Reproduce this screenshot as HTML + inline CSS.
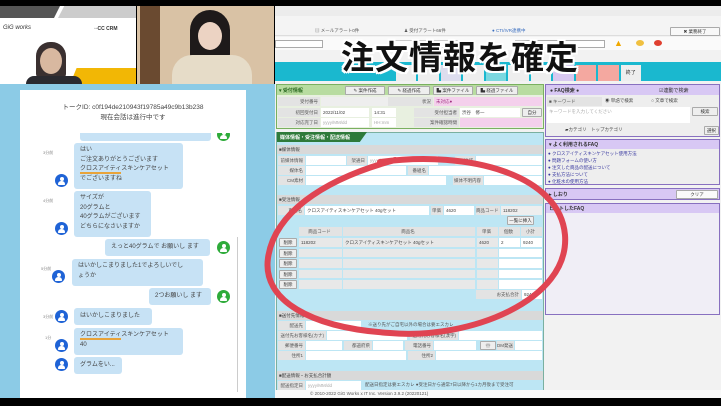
<!DOCTYPE html>
<html><head><meta charset="utf-8"><style>
*{margin:0;padding:0;box-sizing:border-box;white-space:nowrap}
body{width:721px;height:406px;overflow:hidden;background:#000;position:relative;font-family:"Liberation Sans","Noto Sans CJK JP",sans-serif;font-size:6px;color:#333}
.a{position:absolute}
.bub{position:absolute;background:#c7e2f5;border-radius:3px;padding:3px 6px;font-size:6px;line-height:9.5px;color:#444;overflow:hidden}
.av{position:absolute;width:13px;height:13px;border-radius:50%;background:#1f63d6}
.av.g{background:#2eab3a}
.av::before{content:"";position:absolute;left:4.5px;top:2.5px;width:4px;height:4px;border-radius:50%;background:#fff}
.av::after{content:"";position:absolute;left:3px;top:7px;width:7px;height:3.5px;border-radius:4px 4px 1px 1px;background:#fff}
.tm{position:absolute;font-size:4px;color:#888}
.lb{position:absolute;background:#e3e3e3;font-size:4.5px;color:#555;text-align:right;padding-right:2px;height:9px;line-height:9px;overflow:hidden}
.in{position:absolute;background:#fff;height:9px;font-size:4.5px;line-height:9px;padding-left:2px;color:#444;overflow:hidden}
.btn{position:absolute;background:#eee;border:1px solid #aaa;border-radius:1px;font-size:4.5px;text-align:center;color:#333;height:9px;line-height:7px;overflow:hidden}
.sec{position:absolute;background:#d9d9d9;font-size:4.5px;color:#444;height:9px;line-height:9px;padding-left:2px}
</style></head><body>
<div class="a" style="left:0;top:6px;width:136px;height:78px;background:#fff"></div>
<div class="a" style="left:0;top:6px;width:60px;height:12px;background:#555;clip-path:polygon(0 0,100% 0,90% 100%,0 100%)"></div>
<div class="a" style="left:58px;top:6px;width:78px;height:12px;background:#ccc;clip-path:polygon(8% 0,100% 0,100% 100%,0 100%)"></div>
<div class="a" style="left:70px;top:68px;width:66px;height:16px;background:#f2b705;clip-path:polygon(10% 0,100% 0,100% 100%,0 100%)"></div>
<div class="a" style="left:3px;top:25px;font-size:6px;font-style:italic;color:#333">GiG works</div>
<div class="a" style="left:94px;top:26px;font-size:5px;color:#333;font-weight:bold">◦◦CC CRM</div>
<div class="a" style="left:36px;top:42px;width:30px;height:36px;border-radius:14px 14px 4px 4px;background:#3a3030"></div>
<div class="a" style="left:40px;top:48px;width:22px;height:26px;border-radius:50%;background:#d8b8a0"></div>
<div class="a" style="left:26px;top:76px;width:56px;height:8px;border-radius:10px 10px 0 0;background:#2a2a30"></div>
<div class="a" style="left:137px;top:6px;width:137px;height:78px;background:#d9c2a5"></div>
<div class="a" style="left:140px;top:6px;width:20px;height:78px;background:#6a4a30"></div>
<div class="a" style="left:190px;top:10px;width:40px;height:50px;border-radius:20px 20px 6px 6px;background:#1e1a1a"></div>
<div class="a" style="left:198px;top:22px;width:24px;height:28px;border-radius:50%;background:#ecd3c3"></div>
<div class="a" style="left:172px;top:55px;width:80px;height:29px;border-radius:20px 20px 0 0;background:#e6dcc8"></div>
<div class="a" style="left:0;top:84px;width:275px;height:314px;background:#8ccbe6"></div>
<div class="a" style="left:20px;top:90px;width:226px;height:308px;background:#fff"></div>
<div class="a" style="left:20px;top:103px;width:226px;text-align:center;font-size:6.5px;line-height:10px;color:#444">トークID: c0f194de210943f19785a49c9b13b238<br>現在会話は進行中です</div>
<div class="bub" style="left:80px;top:128px;width:131px;height:13px;padding:0"></div>
<div class="av g" style="left:217px;top:128px"></div>
<div class="a" style="left:20px;top:128px;width:226px;height:5px;background:#fff"></div>
<div class="tm" style="left:43px;top:150px">3分前</div>
<div class="bub" style="left:74px;top:143px;width:109px;height:46px">はい<br>ご注文ありがとうございます<br><span style="border-bottom:2px solid #e8a33a">クロスアイティ</span>スキンケアセット<br>でございますね</div>
<div class="av" style="left:55px;top:174px"></div>
<div class="tm" style="left:43px;top:198px">4分前</div>
<div class="bub" style="left:74px;top:191px;width:77px;height:46px">サイズが<br>20グラムと<br>40グラムがございます<br>どちらになさいますか</div>
<div class="av" style="left:55px;top:222px"></div>
<div class="bub" style="left:105px;top:239px;width:105px;height:17px;line-height:11px">えっと40グラムで お願いし ます</div>
<div class="av g" style="left:217px;top:241px"></div>
<div class="tm" style="left:41px;top:266px">5分前</div>
<div class="bub" style="left:72px;top:259px;width:131px;height:27px">はいかしこまりました1でよろしいでし<br>ょうか</div>
<div class="av" style="left:52px;top:270px"></div>
<div class="bub" style="left:149px;top:288px;width:62px;height:17px;line-height:11px">2つお願いし ます</div>
<div class="av g" style="left:217px;top:290px"></div>
<div class="tm" style="left:43px;top:314px">3分前</div>
<div class="bub" style="left:74px;top:308px;width:78px;height:17px;line-height:11px">はいかしこまりました</div>
<div class="av" style="left:55px;top:310px"></div>
<div class="tm" style="left:45px;top:335px">1分</div>
<div class="bub" style="left:74px;top:328px;width:109px;height:27px"><span style="border-bottom:2px solid #e8a33a">クロスアイティ</span>スキンケアセット<br>40</div>
<div class="av" style="left:55px;top:339px"></div>
<div class="bub" style="left:74px;top:357px;width:48px;height:17px;line-height:11px">グラムをい...</div>
<div class="av" style="left:55px;top:358px"></div>
<div class="a" style="left:237px;top:237px;width:1px;height:155px;background:#ccc"></div>
<div class="a" style="left:275px;top:6px;width:446px;height:392px;background:#f2f2f2"></div>
<div class="a" style="left:275px;top:6px;width:446px;height:10px;background:#ececec"></div>
<div class="a" style="left:275px;top:16px;width:446px;height:20px;background:#f4f4f4;border-bottom:1px solid #ddd"></div>
<div class="a" style="left:315px;top:28px;font-size:4.5px;color:#555">▤ メールアラート0件</div>
<div class="a" style="left:404px;top:28px;font-size:4.5px;color:#555">♟ 受付アラート66件</div>
<div class="a" style="left:492px;top:28px;font-size:4.5px;color:#3b6fc0">● CTI/IVR連携中</div>
<div class="btn" style="left:670px;top:27px;width:50px;height:9px;background:#f8f8f8">✖ 業務終了</div>
<div class="a" style="left:275px;top:37px;width:446px;height:13px;background:#fafafa"></div>
<div class="in" style="left:275px;top:40px;width:48px;border:1px solid #aaa;height:8px"></div>
<div class="in" style="left:390px;top:40px;width:80px;border:1px solid #ccc;height:8px"></div>
<div class="in" style="left:515px;top:40px;width:90px;border:1px solid #aaa;height:8px"></div>
<div class="a" style="left:614px;top:38px;color:#f0a800;font-size:9px">▲</div>
<div class="a" style="left:636px;top:40px;width:8px;height:6px;border-radius:50%;background:#f0c040"></div>
<div class="a" style="left:654px;top:40px;width:8px;height:6px;border-radius:50%;background:#e04030"></div>
<div class="a" style="left:275px;top:62px;width:446px;height:19px;background:#1ab8cf"></div>
<div class="a" style="left:396px;top:65px;width:245px;height:16px;display:flex;gap:2px">
<div style="flex:1;background:#eee"></div><div style="flex:1;background:#eee"></div><div style="flex:1;background:#dde"></div><div style="flex:1;background:#eee"></div><div style="flex:1;background:#7cd8e0"></div><div style="flex:1;background:#eee"></div><div style="flex:1;background:#eee"></div><div style="flex:1;background:#d8c8f0"></div><div style="flex:1;background:#f4a8a0"></div><div style="flex:1;background:#f4a8a0"></div><div style="flex:1;background:#eee;font-size:5px;text-align:center;line-height:16px">終了</div></div>
<div class="a" style="left:341px;top:38px;font-size:33px;font-weight:bold;color:#111;letter-spacing:1px;text-shadow:2px 0 #fff,-2px 0 #fff,0 2px #fff,0 -2px #fff,2px 2px #fff,-2px -2px #fff,2px -2px #fff,-2px 2px #fff;line-height:40px">注文情報を確定</div>
<div class="a" style="left:276px;top:84px;width:268px;height:45px;background:#e8f0e0;border:1px solid #7ab060"></div>
<div class="a" style="left:277px;top:85px;width:266px;height:10px;background:#b8dca0"></div>
<div class="a" style="left:279px;top:87px;font-size:5px;color:#2a6a20;font-weight:bold">▾ 受付情報</div>
<div class="btn" style="left:345px;top:86px;width:40px">✎ 案件作成</div>
<div class="btn" style="left:388px;top:86px;width:42px">✎ 経過作成</div>
<div class="btn" style="left:433px;top:86px;width:40px">▙ 案件ファイル</div>
<div class="btn" style="left:476px;top:86px;width:42px">▙ 経過ファイル</div>
<div class="lb" style="left:278px;top:97px;width:42px">受付番号</div>
<div class="in" style="left:321px;top:97px;width:68px;background:#eee"></div>
<div class="lb" style="left:388px;top:97px;width:45px">状況</div>
<div class="in" style="left:434px;top:97px;width:108px;background:#f4d0ec;color:#a03080">未対応●</div>
<div class="lb" style="left:278px;top:108px;width:42px">初回受付日</div>
<div class="in" style="left:321px;top:108px;width:48px">2022/11/02</div>
<div class="in" style="left:372px;top:108px;width:24px">14:31</div>
<div class="lb" style="left:414px;top:108px;width:45px">受付担当者</div>
<div class="in" style="left:460px;top:108px;width:60px">渋谷　修一</div>
<div class="btn" style="left:522px;top:108px;width:20px">自分</div>
<div class="lb" style="left:278px;top:118px;width:42px">対応完了日</div>
<div class="in" style="left:321px;top:118px;width:48px;color:#aaa">yyyy/MM/dd</div>
<div class="in" style="left:372px;top:118px;width:24px;color:#aaa">HH:mm</div>
<div class="lb" style="left:414px;top:118px;width:45px">案件確認時間</div>
<div class="in" style="left:460px;top:118px;width:82px;background:#f4d0ec"></div>
<div class="a" style="left:276px;top:132px;width:268px;height:262px;background:#bde6f4;border:1px solid #7ab0a0"></div>
<div class="a" style="left:277px;top:132px;width:90px;height:10px;background:#2e7a3a;clip-path:polygon(0 0,100% 0,92% 100%,0 100%);color:#fff;font-size:5px;font-weight:bold;padding:2px 3px">媒体情報・受注情報・配送情報</div>
<div class="sec" style="left:277px;top:145px;width:266px">■媒体情報</div>
<div class="lb" style="left:278px;top:156px;width:27px">前媒体情報</div><div class="in" style="left:306px;top:156px;width:40px"></div>
<div class="lb" style="left:347px;top:156px;width:20px">架通日</div><div class="in" style="left:368px;top:156px;width:70px;color:#aaa">yyyy/MM/dd</div>
<div class="lb" style="left:455px;top:156px;width:20px">地域</div><div class="in" style="left:476px;top:156px;width:66px"></div>
<div class="lb" style="left:278px;top:166px;width:27px">媒体名</div><div class="in" style="left:306px;top:166px;width:100px"></div>
<div class="lb" style="left:408px;top:166px;width:20px">番組名</div><div class="in" style="left:429px;top:166px;width:113px"></div>
<div class="lb" style="left:278px;top:176px;width:27px">CM素材</div><div class="in" style="left:306px;top:176px;width:140px"></div>
<div class="lb" style="left:453px;top:176px;width:30px">媒体不明内容</div><div class="in" style="left:484px;top:176px;width:58px"></div>
<div class="sec" style="left:277px;top:195px;width:266px">■受注情報</div>
<div class="lb" style="left:278px;top:206px;width:26px">商品名</div><div class="in" style="left:305px;top:206px;width:124px">クロスアイティスキンケアセット 40gセット</div>
<div class="lb" style="left:431px;top:206px;width:12px">単価</div><div class="in" style="left:444px;top:206px;width:30px">4620</div>
<div class="lb" style="left:476px;top:206px;width:24px">商品コード</div><div class="in" style="left:501px;top:206px;width:41px;background:#eee">118202</div>
<div class="btn" style="left:507px;top:216px;width:27px">一覧に挿入</div>
<div class="lb" style="left:299px;top:227px;width:43px;text-align:center">商品コード</div>
<div class="lb" style="left:343px;top:227px;width:132px;text-align:center">商品名</div>
<div class="lb" style="left:477px;top:227px;width:21px;text-align:center">単価</div>
<div class="lb" style="left:499px;top:227px;width:21px;text-align:center">個数</div>
<div class="lb" style="left:521px;top:227px;width:21px;text-align:center">小計</div>
<div class="a" style="left:278px;top:238px">
<div class="btn" style="position:absolute;left:1px;top:0;width:18px">削除</div>
<div class="in" style="left:21px;top:0;width:43px;background:#e8e8e8">118202</div>
<div class="in" style="left:65px;top:0;width:132px;background:#e8e8e8">クロスアイティスキンケアセット 40gセット</div>
<div class="in" style="left:199px;top:0;width:21px;background:#e8e8e8">4620</div>
<div class="in" style="left:221px;top:0;width:21px">2</div>
<div class="in" style="left:243px;top:0;width:21px">9240</div>
</div>
<div class="a" style="left:278px;top:248px;width:264px;height:44px">
<div style="position:absolute;left:21px;top:1px;width:43px;height:40px;background:#e8e8e8"></div>
<div style="position:absolute;left:65px;top:1px;width:132px;height:40px;background:#e8e8e8"></div>
<div style="position:absolute;left:199px;top:1px;width:21px;height:40px;background:#e8e8e8"></div>
<div style="position:absolute;left:221px;top:1px;width:43px;height:40px;background:#fff"></div>
<div style="position:absolute;left:0;top:9px;width:264px;height:2px;background:#bde6f4"></div>
<div style="position:absolute;left:0;top:19.5px;width:264px;height:2px;background:#bde6f4"></div>
<div style="position:absolute;left:0;top:30px;width:264px;height:2px;background:#bde6f4"></div>
<div class="btn" style="left:1px;top:1px;width:18px">削除</div>
<div class="btn" style="left:1px;top:11px;width:18px">削除</div>
<div class="btn" style="left:1px;top:21.5px;width:18px">削除</div>
<div class="btn" style="left:1px;top:32px;width:18px">削除</div>
</div>
<div class="lb" style="left:476px;top:290px;width:45px">お支払合計</div><div class="in" style="left:522px;top:290px;width:20px">9240</div>
<div class="sec" style="left:277px;top:311px;width:266px">■送付先情報</div>
<div class="lb" style="left:278px;top:321px;width:27px">配送先</div><div class="in" style="left:306px;top:321px;width:55px"></div>
<div class="a" style="left:368px;top:322px;font-size:4.5px;color:#555">※送り先がご自宅以外の場合は要エスカレ</div>
<div class="lb" style="left:278px;top:331px;width:48px">送付先お客様名(カナ)</div><div class="in" style="left:327px;top:331px;width:80px"></div>
<div class="lb" style="left:410px;top:331px;width:48px">送付先お客様名(漢字)</div><div class="in" style="left:459px;top:331px;width:83px"></div>
<div class="lb" style="left:278px;top:341px;width:27px">郵便番号</div><div class="in" style="left:306px;top:341px;width:36px"></div>
<div class="lb" style="left:344px;top:341px;width:28px">都道府県</div><div class="in" style="left:373px;top:341px;width:30px"></div>
<div class="lb" style="left:405px;top:341px;width:28px">電話番号</div><div class="in" style="left:434px;top:341px;width:42px"></div>
<div class="btn" style="left:480px;top:341px;width:16px">☏</div>
<div class="lb" style="left:497px;top:341px;width:17px">DM発送</div><div class="in" style="left:515px;top:341px;width:27px"></div>
<div class="lb" style="left:278px;top:351px;width:27px">住所1</div><div class="in" style="left:306px;top:351px;width:100px"></div>
<div class="lb" style="left:408px;top:351px;width:27px">住所2</div><div class="in" style="left:436px;top:351px;width:106px"></div>
<div class="sec" style="left:277px;top:371px;width:266px">■配送情報・お支払合計額</div>
<div class="lb" style="left:278px;top:381px;width:27px">配送指定日</div><div class="in" style="left:306px;top:381px;width:55px;color:#aaa">yyyy/MM/dd</div>
<div class="a" style="left:365px;top:382px;font-size:4.5px;color:#555">配送日指定は要エスカレ ●受注日から通常7日以降から1カ月後まで受注可</div>
<div class="a" style="left:275px;top:390px;width:446px;height:8px;background:#f8f8f8"></div>
<div class="a" style="left:310px;top:391px;font-size:4.5px;color:#555">© 2010-2022 GiG Works x IT Inc. Version 3.9.2 (20220121)</div>
<div class="a" style="left:545px;top:84px;width:175px;height:53px;background:#eee;border:1px solid #8870c0"></div>
<div class="a" style="left:546px;top:85px;width:173px;height:10px;background:#d8c8f4;font-size:5px;color:#333;padding:2px 4px;font-weight:bold">● FAQ検索 ●<span style="position:absolute;left:113px;font-weight:normal">☑連動で検索</span></div>
<div class="lb" style="left:547px;top:97px;width:55px;text-align:left;padding-left:2px">■ キーワード</div>
<div class="a" style="left:605px;top:98px;font-size:4.5px;color:#444">◉ 単語で検索　　　　○ 文章で検索</div>
<div class="in" style="left:547px;top:107px;width:143px;height:16px;color:#aaa">キーワードを入力してください</div>
<div class="btn" style="left:692px;top:107px;width:26px">検索</div>
<div class="a" style="left:565px;top:127px;font-size:4.5px;color:#444">▰カテゴリ　トップカテゴリ</div>
<div class="btn" style="left:704px;top:126px;width:15px">選択</div>
<div class="a" style="left:545px;top:139px;width:175px;height:46px;background:#eee;border:1px solid #8870c0"></div>
<div class="a" style="left:546px;top:140px;width:173px;height:9px;background:#d8c8f4;font-size:5px;padding:1px 3px;font-weight:bold;color:#333">▾ よく利用されるFAQ</div>
<div class="a" style="left:548px;top:150px;font-size:4.5px;line-height:7px;color:#3838a0">● クロスアイティスキンケアセット使用方法<br>● 問題フォームの使い方<br>● 注文した商品の配送について<br>● 支払方法について<br>● 化粧水の使用方法</div>
<div class="a" style="left:545px;top:188px;width:175px;height:12px;background:#d8c8f4;border:1px solid #8870c0;font-size:5px;padding:2px 3px;font-weight:bold">▸ しおり</div>
<div class="btn" style="left:676px;top:190px;width:42px;background:#fafafa">クリア</div>
<div class="a" style="left:545px;top:203px;width:175px;height:112px;background:#f0eef6;border:1px solid #8870c0"></div>
<div class="a" style="left:546px;top:204px;width:173px;height:9px;background:#d8c8f4;font-size:5px;padding:1px 3px;font-weight:bold;color:#333">ヒットしたFAQ</div>
<svg class="a" style="left:0;top:0" width="721" height="406"><path d="M380 162 C470 150 560 175 565 235 C570 300 470 340 390 333 C310 328 262 300 268 258 C274 215 320 180 395 160" fill="none" stroke="#e04452" stroke-width="6" stroke-linecap="round"/></svg>
<div class="a" style="left:0;top:0;width:721px;height:6px;background:#000"></div>
<div class="a" style="left:0;top:398px;width:721px;height:8px;background:#000"></div>
</body></html>
